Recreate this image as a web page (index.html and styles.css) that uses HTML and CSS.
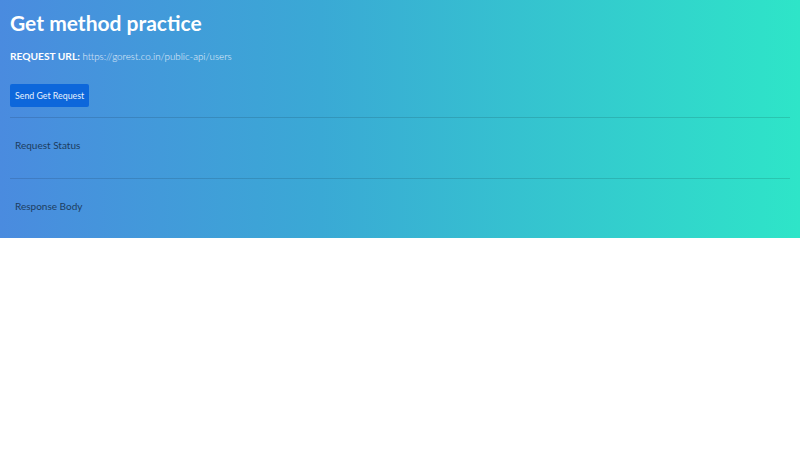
FILE: index.html
```html
<!DOCTYPE html>
<html>
<head>
<meta charset="utf-8">
<link rel="stylesheet" href="styles.css">
</head>
<body>
<div class="page">
  <h1 class="title">Get method practice</h1>
  <p class="url"><b>REQUEST URL:</b> <span class="link">https://gorest.co.in/public-api/users</span></p>
  <button class="btn">Send Get Request</button>
  <hr class="rule first">
  <div class="section">Request Status</div>
  <hr class="rule">
  <div class="section">Response Body</div>
</div>
</body>
</html>
```
FILE: styles.css
```css
html, body {
  margin: 0;
  padding: 0;
  background: #fff;
}
.page {
  font-family: "Lato", "Open Sans", sans-serif;
  background: linear-gradient(to right, #4a8bdf 0%, #3aa9d5 40%, #2ee5c8 100%);
  padding: 8px 10px 0 10px;
  height: 230px;
}
.title {
  margin: 0;
  font-size: 21px;
  font-weight: 700;
  color: #fff;
  line-height: 30px;
}
.url {
  margin: 10px 0 0 0;
  font-size: 10.2px;
  line-height: 16px;
  color: #e8f2fb;
}
.url b {
  font-weight: 700;
  color: #fff;
}
.url .link {
  font-size: 9.8px;
  font-weight: 300;
  color: #e6f0fa;
}
.btn {
  margin-top: 20px;
  display: block;
  font-family: inherit;
  font-size: 8.8px;
  line-height: 15px;
  padding: 4px 5px;
  width: 79px;
  height: 23px;
  text-align: center;
  white-space: nowrap;
  color: #e8f1fc;
  background: #0d67db;
  border: 0;
  border-radius: 2px;
}
.rule {
  margin: 0;
  border: 0;
  border-top: 1px solid rgba(0, 0, 0, 0.12);
}
.rule.first {
  margin-top: 10px;
}
.section {
  padding: 0 5px;
  height: 60px;
  line-height: 54px;
  font-size: 10px;
  color: #1d3d5f;
}
```
